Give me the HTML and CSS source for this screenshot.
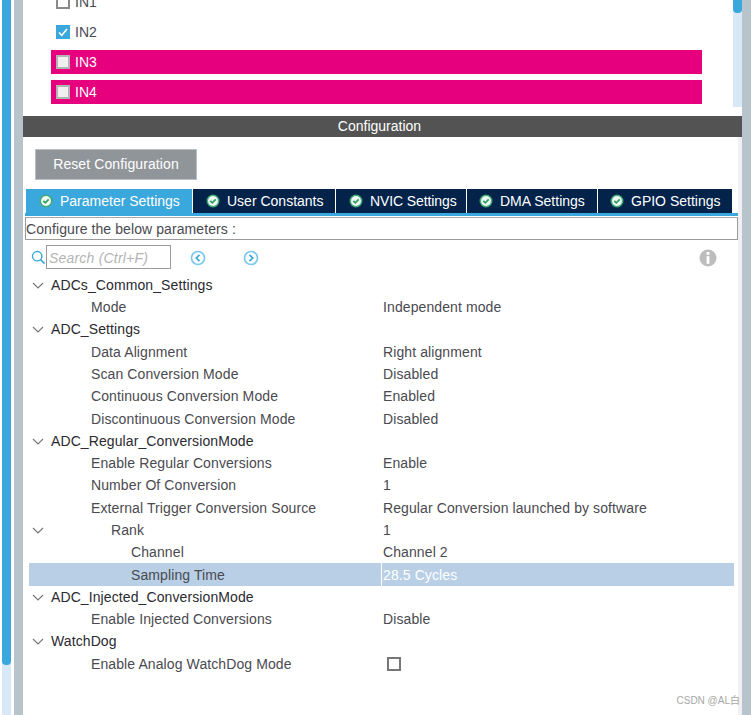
FILE: index.html
```html
<!DOCTYPE html>
<html>
<head>
    <meta charset="utf-8">
    <link rel="stylesheet" href="styles.css">
    <title>Configuration</title>
</head>

<body>
    <div class="page-scroll"><div class="page-thumb"></div></div>
    <div class="gutter"></div>
    <div class="main">
        <div class="top-panel">
            <div class="channels">
                <div class="channel first"><span class="check"></span>IN1</div>
                <div class="channel"><span class="check on"><svg width="14" height="14" viewBox="0 0 14 14"><path d="M3 7.5l2.8 2.8L11 4" fill="none" stroke="#fff" stroke-width="1.6"/></svg></span>IN2</div>
                <div class="channel used"><span class="check"></span>IN3</div>
                <div class="channel used"><span class="check"></span>IN4</div>
            </div>
            <div class="top-scroll"><div class="top-thumb"></div></div>
        </div>
        <div class="config-title">Configuration</div>
        <div class="config">
            <button class="reset">Reset Configuration</button>
            <div class="tabs">
                <div class="tab active tab-param"><svg class="ok" width="14" height="14" viewBox="0 0 14 14"><circle cx="7" cy="7" r="6.5" fill="#3fa873"/><circle cx="7" cy="7" r="5" fill="#eef8f2"/><path d="M4.3 6.8l2 2 3.4-3.4" fill="none" stroke="#2f9e66" stroke-width="1.8"/></svg>Parameter Settings</div>
                <div class="tab tab-user"><svg class="ok" width="14" height="14" viewBox="0 0 14 14"><circle cx="7" cy="7" r="6.5" fill="#3fa873"/><circle cx="7" cy="7" r="5" fill="#eef8f2"/><path d="M4.3 6.8l2 2 3.4-3.4" fill="none" stroke="#2f9e66" stroke-width="1.8"/></svg>User Constants</div>
                <div class="tab tab-nvic"><svg class="ok" width="14" height="14" viewBox="0 0 14 14"><circle cx="7" cy="7" r="6.5" fill="#3fa873"/><circle cx="7" cy="7" r="5" fill="#eef8f2"/><path d="M4.3 6.8l2 2 3.4-3.4" fill="none" stroke="#2f9e66" stroke-width="1.8"/></svg>NVIC Settings</div>
                <div class="tab tab-dma"><svg class="ok" width="14" height="14" viewBox="0 0 14 14"><circle cx="7" cy="7" r="6.5" fill="#3fa873"/><circle cx="7" cy="7" r="5" fill="#eef8f2"/><path d="M4.3 6.8l2 2 3.4-3.4" fill="none" stroke="#2f9e66" stroke-width="1.8"/></svg>DMA Settings</div>
                <div class="tab tab-gpio"><svg class="ok" width="14" height="14" viewBox="0 0 14 14"><circle cx="7" cy="7" r="6.5" fill="#3fa873"/><circle cx="7" cy="7" r="5" fill="#eef8f2"/><path d="M4.3 6.8l2 2 3.4-3.4" fill="none" stroke="#2f9e66" stroke-width="1.8"/></svg>GPIO Settings</div>
            </div>
            <div class="tab-line"></div>
            <div class="hint">Configure the below parameters :</div>
            <div class="search-bar">
                <svg class="search-icon" width="15" height="15" viewBox="0 0 15 15"><circle cx="6.2" cy="6.2" r="4.7" fill="none" stroke="#3aa8dc" stroke-width="1.4"/><path d="M9.6 9.6l4 4" stroke="#3aa8dc" stroke-width="1.6"/></svg>
                <div class="search">Search (Ctrl+F)</div>
                <svg class="nav-prev" width="16" height="16" viewBox="0 0 16 16"><circle cx="8" cy="8" r="6.5" fill="none" stroke="#7cc8ec" stroke-width="1.7"/><path d="M9.5 4.8L6.3 8l3.2 3.2" fill="none" stroke="#3aa8dc" stroke-width="1.7"/></svg>
                <svg class="nav-next" width="16" height="16" viewBox="0 0 16 16"><circle cx="8" cy="8" r="6.5" fill="none" stroke="#7cc8ec" stroke-width="1.7"/><path d="M6.5 4.8L9.7 8l-3.2 3.2" fill="none" stroke="#3aa8dc" stroke-width="1.7"/></svg>
                <svg class="info" width="18" height="18" viewBox="0 0 18 18"><circle cx="9" cy="9" r="8.5" fill="#bdbdbd"/><rect x="7.6" y="3" width="2.8" height="2.8" fill="#fff"/><rect x="7.6" y="7.2" width="2.8" height="7.6" fill="#fff"/></svg>
            </div>
            <div class="tree">
                <div class="row group"><svg class="arrow" width="12" height="7" viewBox="0 0 12 7"><path d="M1 1l5 5 5-5" fill="none" stroke="#777" stroke-width="1.2"/></svg><span class="name">ADCs_Common_Settings</span></div>
                <div class="row"><span class="name lvl1">Mode</span><span class="value">Independent mode</span></div>
                <div class="row group"><svg class="arrow" width="12" height="7" viewBox="0 0 12 7"><path d="M1 1l5 5 5-5" fill="none" stroke="#777" stroke-width="1.2"/></svg><span class="name">ADC_Settings</span></div>
                <div class="row"><span class="name lvl1">Data Alignment</span><span class="value">Right alignment</span></div>
                <div class="row"><span class="name lvl1">Scan Conversion Mode</span><span class="value">Disabled</span></div>
                <div class="row"><span class="name lvl1">Continuous Conversion Mode</span><span class="value">Enabled</span></div>
                <div class="row"><span class="name lvl1">Discontinuous Conversion Mode</span><span class="value">Disabled</span></div>
                <div class="row group"><svg class="arrow" width="12" height="7" viewBox="0 0 12 7"><path d="M1 1l5 5 5-5" fill="none" stroke="#777" stroke-width="1.2"/></svg><span class="name">ADC_Regular_ConversionMode</span></div>
                <div class="row"><span class="name lvl1">Enable Regular Conversions</span><span class="value">Enable</span></div>
                <div class="row"><span class="name lvl1">Number Of Conversion</span><span class="value">1</span></div>
                <div class="row"><span class="name lvl1">External Trigger Conversion Source</span><span class="value">Regular Conversion launched by software</span></div>
                <div class="row"><svg class="arrow" width="12" height="7" viewBox="0 0 12 7"><path d="M1 1l5 5 5-5" fill="none" stroke="#777" stroke-width="1.2"/></svg><span class="name lvl2">Rank</span><span class="value">1</span></div>
                <div class="row"><span class="name lvl3">Channel</span><span class="value">Channel 2</span></div>
                <div class="row selected"><span class="name lvl3">Sampling Time</span><span class="value">28.5 Cycles</span></div>
                <div class="row group"><svg class="arrow" width="12" height="7" viewBox="0 0 12 7"><path d="M1 1l5 5 5-5" fill="none" stroke="#777" stroke-width="1.2"/></svg><span class="name">ADC_Injected_ConversionMode</span></div>
                <div class="row"><span class="name lvl1">Enable Injected Conversions</span><span class="value">Disable</span></div>
                <div class="row group"><svg class="arrow" width="12" height="7" viewBox="0 0 12 7"><path d="M1 1l5 5 5-5" fill="none" stroke="#777" stroke-width="1.2"/></svg><span class="name">WatchDog</span></div>
                <div class="row"><span class="name lvl1">Enable Analog WatchDog Mode</span><span class="value"><span class="check plain"></span></span></div>
            </div>
            <div class="watermark">CSDN @AL白</div>
        </div>
    </div>
    <div class="gutter"></div>
</body>
</html>
```

FILE: styles.css
```css
html, body {
    height: 715px;
    overflow: hidden;
}
body {
    margin: 0;
    display: flex;
    background-color: #ffffff;
    font-family: "Liberation Sans", "Noto Sans CJK SC", sans-serif;
    font-size: 14px;
    color: #4a4a50;
}
.page-scroll {
    width: 9px;
    height: 715px;
    margin-left: 2px;
    margin-right: 3px;
    background-color: #d9e8f6;
}
.page-thumb {
    height: 665px;
    background-color: #3aa8dc;
    border-radius: 0 0 4px 4px;
}
.gutter {
    width: 9px;
    height: 715px;
    background-color: #b8c4cc;
}
.main {
    width: 719px;
    display: flex;
    flex-direction: column;
}
.top-panel {
    height: 107px;
    display: flex;
    justify-content: space-between;
    overflow: hidden;
}
.channels {
    width: 651px;
    margin-left: 28px;
}
.channel {
    height: 24px;
    margin-bottom: 6px;
    display: flex;
    align-items: center;
}
.channel.first {
    margin-top: -10px;
}
.channel.used {
    background-color: #e6007e;
    color: #ffffff;
}
.check {
    width: 14px;
    height: 14px;
    margin-left: 5px;
    margin-right: 5px;
    box-sizing: border-box;
    border: 2px solid #8a8a8a;
    background-color: #ffffff;
    display: inline-block;
    flex: none;
}
.used .check {
    background-color: #f0f0f0;
    border-color: #b4b4b4;
}
.check.on {
    border: 0;
    background-color: #3aa8dc;
}
.check.plain {
    margin: 0 0 0 4px;
    border-color: #777777;
    display: block;
}
.top-scroll {
    width: 9px;
    background-color: #d9e8f6;
}
.top-thumb {
    height: 13px;
    background-color: #3aa8dc;
    border-radius: 0 0 4px 4px;
}
.config-title {
    margin-top: 9px;
    height: 21px;
    line-height: 21px;
    padding-right: 6px;
    background-color: #525352;
    color: #ffffff;
    text-align: center;
}
.config {
    flex: 1;
    position: relative;
    border-right: 4px solid #f0f0f0;
}
.reset {
    display: block;
    width: 162px;
    height: 31px;
    margin: 12px 0 9px 12px;
    padding: 0 0 2px;
    border: 1px solid #b8c0c4;
    background-color: #90959a;
    color: #ffffff;
    font-family: inherit;
    font-size: 14px;
    letter-spacing: 0.1px;
}
.tabs {
    display: flex;
    gap: 1px;
    margin-left: 3px;
}
.tab {
    height: 24px;
    display: flex;
    align-items: center;
    box-sizing: border-box;
    background-color: #03234b;
    color: #ffffff;
    padding-left: 13px;
}
.tab.active {
    background-color: #3aa8dc;
}
.tab-param { width: 166px; }
.tab-user { width: 142px; }
.tab-nvic { width: 130px; letter-spacing: -0.1px; }
.tab-dma { width: 130px; padding-left: 12px; }
.tab-gpio { width: 134px; padding-left: 12px; }
.ok {
    margin-right: 7px;
    flex: none;
}
.tab-line {
    height: 3px;
    margin-left: 2px;
    background-color: #3aa8dc;
}
.hint {
    height: 23px;
    line-height: 22px;
    box-sizing: border-box;
    margin: 1px 0 0 2px;
    width: 713px;
    border: 1px solid #9a9a9a;
    border-top-color: #a8a8a8;
    letter-spacing: 0.09px;
    white-space: nowrap;
}
.search-bar {
    height: 24px;
    margin-top: 5px;
    display: flex;
    align-items: center;
}
.search-icon {
    margin-left: 8px;
    flex: none;
}
.search {
    width: 125px;
    height: 24px;
    line-height: 24px;
    box-sizing: border-box;
    border: 1px solid #9a9a9a;
    padding-left: 2px;
    font-style: italic;
    color: #b4b4b4;
    letter-spacing: 0.2px;
}
.nav-prev {
    margin: 2px 0 0 19px;
}
.nav-next {
    margin: 2px 0 0 37px;
}
.info {
    margin: 1px 0 0 440px;
}
.tree {
    margin: 4.6px 0 0 6px;
    width: 705px;
}
.row {
    height: 22.3px;
    display: flex;
    align-items: center;
    position: relative;
    white-space: nowrap;
    letter-spacing: 0.1px;
}
.arrow {
    position: absolute;
    left: 3px;
    top: 8px;
}
.name {
    margin-left: 22px;
}
.group .name {
    color: #2a2a30;
}
.name.lvl1 {
    margin-left: 62px;
}
.name.lvl2 {
    margin-left: 82px;
}
.name.lvl3 {
    margin-left: 102px;
}
.value {
    position: absolute;
    left: 354px;
    top: 0;
    bottom: 0;
    display: flex;
    align-items: center;
}
.selected {
    background-color: #b8cfe6;
}
.selected .value {
    color: #ffffff;
    border-left: 1px solid #ffffff;
    left: 352px;
    padding-left: 1px;
}
.watermark {
    position: absolute;
    right: -2px;
    bottom: 8px;
    font-size: 10px;
    color: #a8a8a8;
}
```
